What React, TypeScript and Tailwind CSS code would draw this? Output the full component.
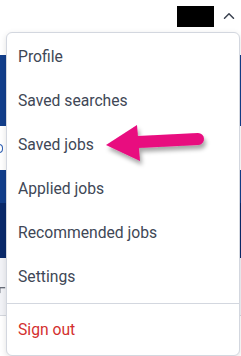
import { ChevronUp } from "lucide-react";

const items = [
  "Profile",
  "Saved searches",
  "Saved jobs",
  "Applied jobs",
  "Recommended jobs",
  "Settings",
];

function Arrow() {
  return (
    <svg
      className="absolute left-[100px] top-[118px] pointer-events-none"
      width="115"
      height="52"
      viewBox="100 118 115 52"
    >
      <defs>
        <filter id="sh" x="-20%" y="-30%" width="150%" height="180%">
          <feDropShadow dx="2" dy="4" stdDeviation="2" floodColor="#000" floodOpacity="0.35" />
        </filter>
      </defs>
      <g filter="url(#sh)" fill="#e8097f">
        <path d="M138 142 L198 139" stroke="#e8097f" strokeWidth="12" strokeLinecap="round" />
        <polygon points="106,145 137,125 140,161" />
      </g>
    </svg>
  );
}

export default function App() {
  return (
    <div
      className="relative w-[241px] h-[356px] overflow-hidden bg-white"
      style={{ fontFamily: "Roboto, 'Liberation Sans', sans-serif" }}
    >
      {/* Header */}
      <header className="h-[55px] flex items-start justify-end pr-[3px] pt-[6px] gap-[6px]">
        <div className="w-[37px] h-[21px] bg-black" />
        <ChevronUp className="w-[18px] h-[18px] text-[#3b4250] mt-[1px]" strokeWidth={2} />
      </header>

      {/* Hero */}
      <section className="h-[203px] flex flex-col">
        <div className="h-[71px] bg-[#123f8c]" />
        <div className="h-[44px] bg-white flex items-center">
          <div className="w-[8px] h-[9px] -ml-[5px] rounded-full border-[1.5px] border-[#2f5fb3] border-l-transparent" />
        </div>
        <div className="h-[33px] bg-[#123f8c]" />
        <div className="h-[55px] bg-[#0a2a6b]" />
      </section>

      <section className="h-[58px] bg-[#f2f3f7] border-b border-[#d4d7de] relative">
        <ChevronUp className="absolute -left-[6px] top-[24px] w-[14px] h-[14px] text-[#3b4250] rotate-[-45deg]" />
      </section>

      {/* Dropdown */}
      <div className="absolute left-[6px] top-[32px] w-[234px] h-[324px] bg-white border border-[#d3d7df] rounded-[6px] shadow-[0_2px_6px_rgba(0,0,0,0.12)] flex flex-col">
        <ul className="pt-[2px] pb-[4px] border-b border-[#d3d7df]">
          {items.map((item) => (
            <li
              key={item}
              className="h-[44px] flex items-center px-[11px] text-[15.7px] text-[#404756]"
            >
              {item}
            </li>
          ))}
        </ul>
        <div className="flex-1 flex items-center px-[11px] text-[15.7px] text-[#d32f2f]">
          Sign out
        </div>
      </div>

      <Arrow />
    </div>
  );
}
